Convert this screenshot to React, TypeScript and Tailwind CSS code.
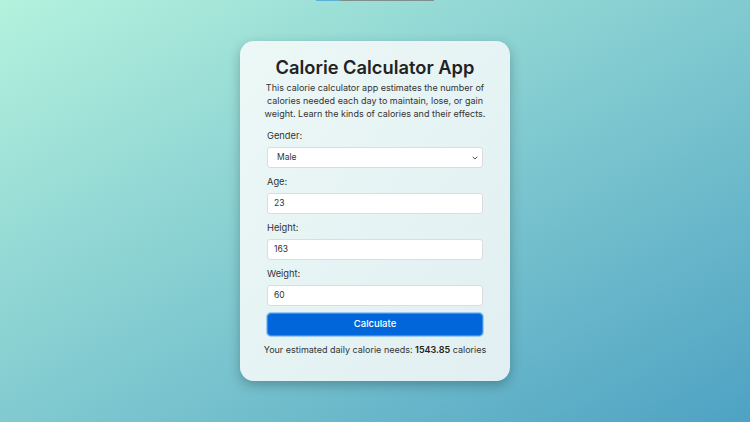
import React from "react";

const font = { fontFamily: "Inter, 'Noto Sans', sans-serif" };

function Field({ label, value }: { label: string; value: string }) {
  return (
    <div className="flex flex-col">
      <label className="text-[9.3px] leading-[14px] text-[#333]">{label}</label>
      <div className="mt-[4px] h-[21px] rounded-[3px] border border-[#dcdcdc] bg-white flex items-center px-[6px] text-[8.5px] text-[#333]">
        {value}
      </div>
    </div>
  );
}

export default function App() {
  return (
    <div
      style={font}
      className="w-[750px] h-[422px] overflow-hidden flex flex-col items-center bg-[linear-gradient(to_bottom_right,#b4f2dd,#4ea2c3)]"
    >
      <div className="flex h-[1px] w-[118px] shrink-0">
        <div className="w-[24px] bg-[#5bb0d6]" />
        <div className="flex-1 bg-[#7e8f8d]" />
      </div>
      <div className="mt-[40px] w-[270px] h-[340px] rounded-[14px] bg-[linear-gradient(to_bottom_right,#ecf8f6,#e1eff2)] shadow-[0_4px_12px_rgba(0,0,0,0.25)] pt-[13px] flex flex-col">
        <h1 className="text-center text-[18.3px] leading-[26px] font-semibold text-[#222]">
          Calorie Calculator App
        </h1>
        <p className="mt-[1px] px-[18px] text-center text-[9px] leading-[13px] text-[#333]">
          This calorie calculator app estimates the number of calories needed each day to maintain, lose, or gain weight. Learn the kinds of calories and their effects.
        </p>
        <div className="mt-[9px] px-[27px] flex flex-col gap-[7px]">
          <div className="flex flex-col">
            <label className="text-[9.3px] leading-[14px] text-[#333]">Gender:</label>
            <div className="mt-[4px] h-[21px] rounded-[3px] border border-[#dcdcdc] bg-white flex items-center justify-between pl-[9px] pr-[4px] text-[8.5px] text-[#333]">
              <span>Male</span>
              <svg width="6" height="4" viewBox="0 0 6 4" fill="none">
                <path d="M0.7 0.8 L3 3 L5.3 0.8" stroke="#444" strokeWidth="0.9" />
              </svg>
            </div>
          </div>
          <Field label="Age:" value="23" />
          <Field label="Height:" value="163" />
          <Field label="Weight:" value="60" />
          <button className="h-[23px] rounded-[4px] bg-[#0066d9] border border-[#3d8fe6] shadow-[0_0_0_1px_#9cc8f4] text-white text-[9.5px] font-medium">
            Calculate
          </button>
          <p className="text-center text-[9px] leading-[14px] text-[#333] whitespace-nowrap -mx-[8px]">
            Your estimated daily calorie needs: <span className="font-semibold text-[#222]">1543.85</span> calories
          </p>
        </div>
      </div>
    </div>
  );
}
